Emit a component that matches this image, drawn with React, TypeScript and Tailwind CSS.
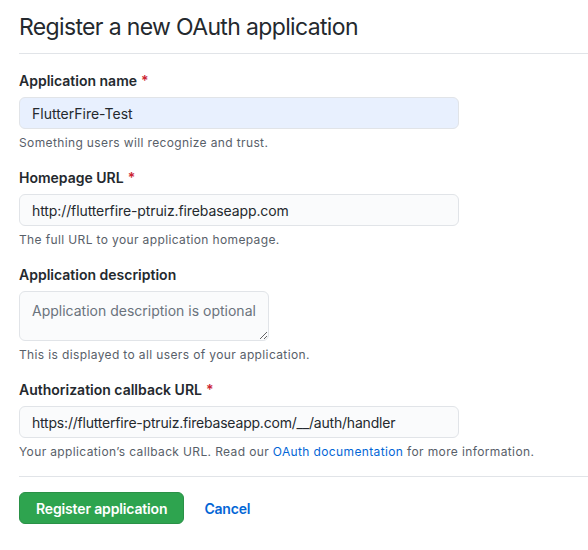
import React from 'react';

const font = { fontFamily: 'Inter, "Liberation Sans", sans-serif' };

const Required = () => <span className="text-[#cb2431] ml-1">*</span>;

const App = () => {
  return (
    <div className="bg-white w-[588px] h-[550px] pl-[19px] text-[#24292e]" style={font}>
      <div className="pt-[9px] pb-2 border-b border-[#e1e4e8]">
        <h1 className="text-[23px] leading-[36px] font-normal tracking-[-0.65px]">Register a new OAuth application</h1>
      </div>

      <form className="pt-4">
        {/* Application name */}
        <div className="mb-[15px]">
          <label className="block text-[14px] leading-[21px] font-semibold mb-[6px]">
            Application name<Required />
          </label>
          <input
            type="text"
            defaultValue="FlutterFire-Test"
            className="block w-[440px] h-[32px] px-3 text-[14px] bg-[#e8f0fe] border border-[#e1e4e8] rounded-md outline-none"
          />
          <p className="mt-[5px] text-[12px] leading-[18px] tracking-[0.37px] text-[#586069]">Something users will recognize and trust.</p>
        </div>

        {/* Homepage URL */}
        <div className="mb-[15px]">
          <label className="block text-[14px] leading-[21px] font-semibold mb-[6px]">
            Homepage URL<Required />
          </label>
          <input
            type="text"
            defaultValue="http://flutterfire-ptruiz.firebaseapp.com"
            className="block w-[440px] h-[32px] px-3 text-[14px] tracking-[-0.1px] bg-[#fafbfc] border border-[#e1e4e8] rounded-md outline-none"
          />
          <p className="mt-[5px] text-[12px] leading-[18px] tracking-[0.37px] text-[#586069]">The full URL to your application homepage.</p>
        </div>

        {/* Application description */}
        <div className="mb-[15px]">
          <label className="block text-[14px] leading-[21px] font-semibold mb-[6px]">Application description</label>
          <textarea
            placeholder="Application description is optional"
            className="block w-[250px] h-[50px] px-3 py-[9px] text-[14px] leading-[20px] bg-[#fafbfc] border border-[#e1e4e8] rounded-md outline-none placeholder:text-[#6a737d]"
          />
          <p className="mt-[5px] text-[12px] leading-[18px] tracking-[0.37px] text-[#586069]">This is displayed to all users of your application.</p>
        </div>

        {/* Authorization callback URL */}
        <div>
          <label className="block text-[14px] leading-[21px] font-semibold mb-[6px]">
            Authorization callback URL<Required />
          </label>
          <input
            type="text"
            defaultValue="https://flutterfire-ptruiz.firebaseapp.com/__/auth/handler"
            className="block w-[440px] h-[32px] px-3 text-[14px] tracking-[-0.2px] bg-[#fafbfc] border border-[#e1e4e8] rounded-md outline-none"
          />
          <p className="mt-[5px] text-[12px] leading-[18px] tracking-[0.37px] text-[#586069]">
            Your application’s callback URL. Read our <a href="#" className="text-[#0366d6]">OAuth documentation</a> for more information.
          </p>
        </div>

        <div className="mt-[15px] pt-[15px] border-t border-[#e1e4e8] flex items-center gap-[20px]">
          <button
            type="button"
            className="h-[32px] px-4 bg-[#2ea44f] text-white text-[14px] font-semibold tracking-[-0.15px] rounded-md border border-[#2a9147]"
          >
            Register application
          </button>
          <a href="#" className="text-[14px] font-semibold tracking-[-0.2px] text-[#0366d6]">Cancel</a>
        </div>
      </form>
    </div>
  );
};

export default App;
